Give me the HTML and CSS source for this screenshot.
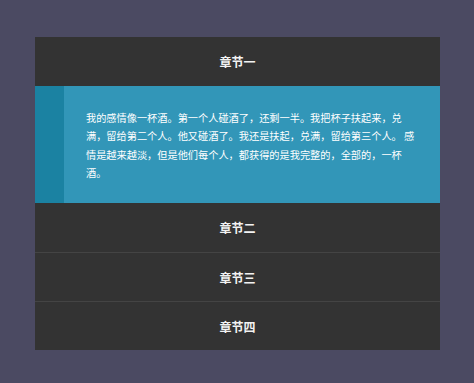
FILE: index.html
```html
<!DOCTYPE html>
<html lang="zh">
<head>
<meta charset="utf-8">
<title>Accordion</title>
<link rel="stylesheet" href="styles.css">
</head>
<body>
<div class="accordion">
  <div class="section open">
    <div class="head">章节一</div>
    <div class="body"><p>我的感情像一杯酒。第一个人碰酒了，还剩一半。我把杯子扶起来，兑满，留给第二个人。他又碰酒了。我还是扶起，兑满，留给第三个人。 感情是越来越淡，但是他们每个人，都获得的是我完整的，全部的，一杯酒。</p></div>
  </div>
  <div class="section">
    <div class="head">章节二</div>
  </div>
  <div class="section">
    <div class="head">章节三</div>
  </div>
  <div class="section">
    <div class="head">章节四</div>
  </div>
</div>
</body>
</html>
```
FILE: styles.css
```css
html, body {
  margin: 0;
  padding: 0;
}
body {
  background: #4b4a62;
  width: 474px;
  height: 383px;
  padding-top: 37px;
  box-sizing: border-box;
  font-family: "Microsoft YaHei", "Noto Sans CJK SC", sans-serif;
}
.accordion {
  width: 405px;
  margin-left: 35px;
  background: #333333;
}
.head {
  box-sizing: border-box;
  height: 49px;
  display: flex;
  align-items: center;
  justify-content: center;
  color: #f2f2f2;
  font-size: 12px;
  font-weight: bold;
  background: #333333;
}
.section + .section .head {
  border-top: 1px solid #444444;
}
.section.open + .section .head {
  border-top: none;
}
.body {
  background: #3296b8;
  border-left: 29px solid #1b82a2;
  padding: 22.75px 20px 20.25px 22px;
}
.body p {
  margin: 0;
  color: #ffffff;
  font-size: 10.2px;
  line-height: 18.5px;
}
```
